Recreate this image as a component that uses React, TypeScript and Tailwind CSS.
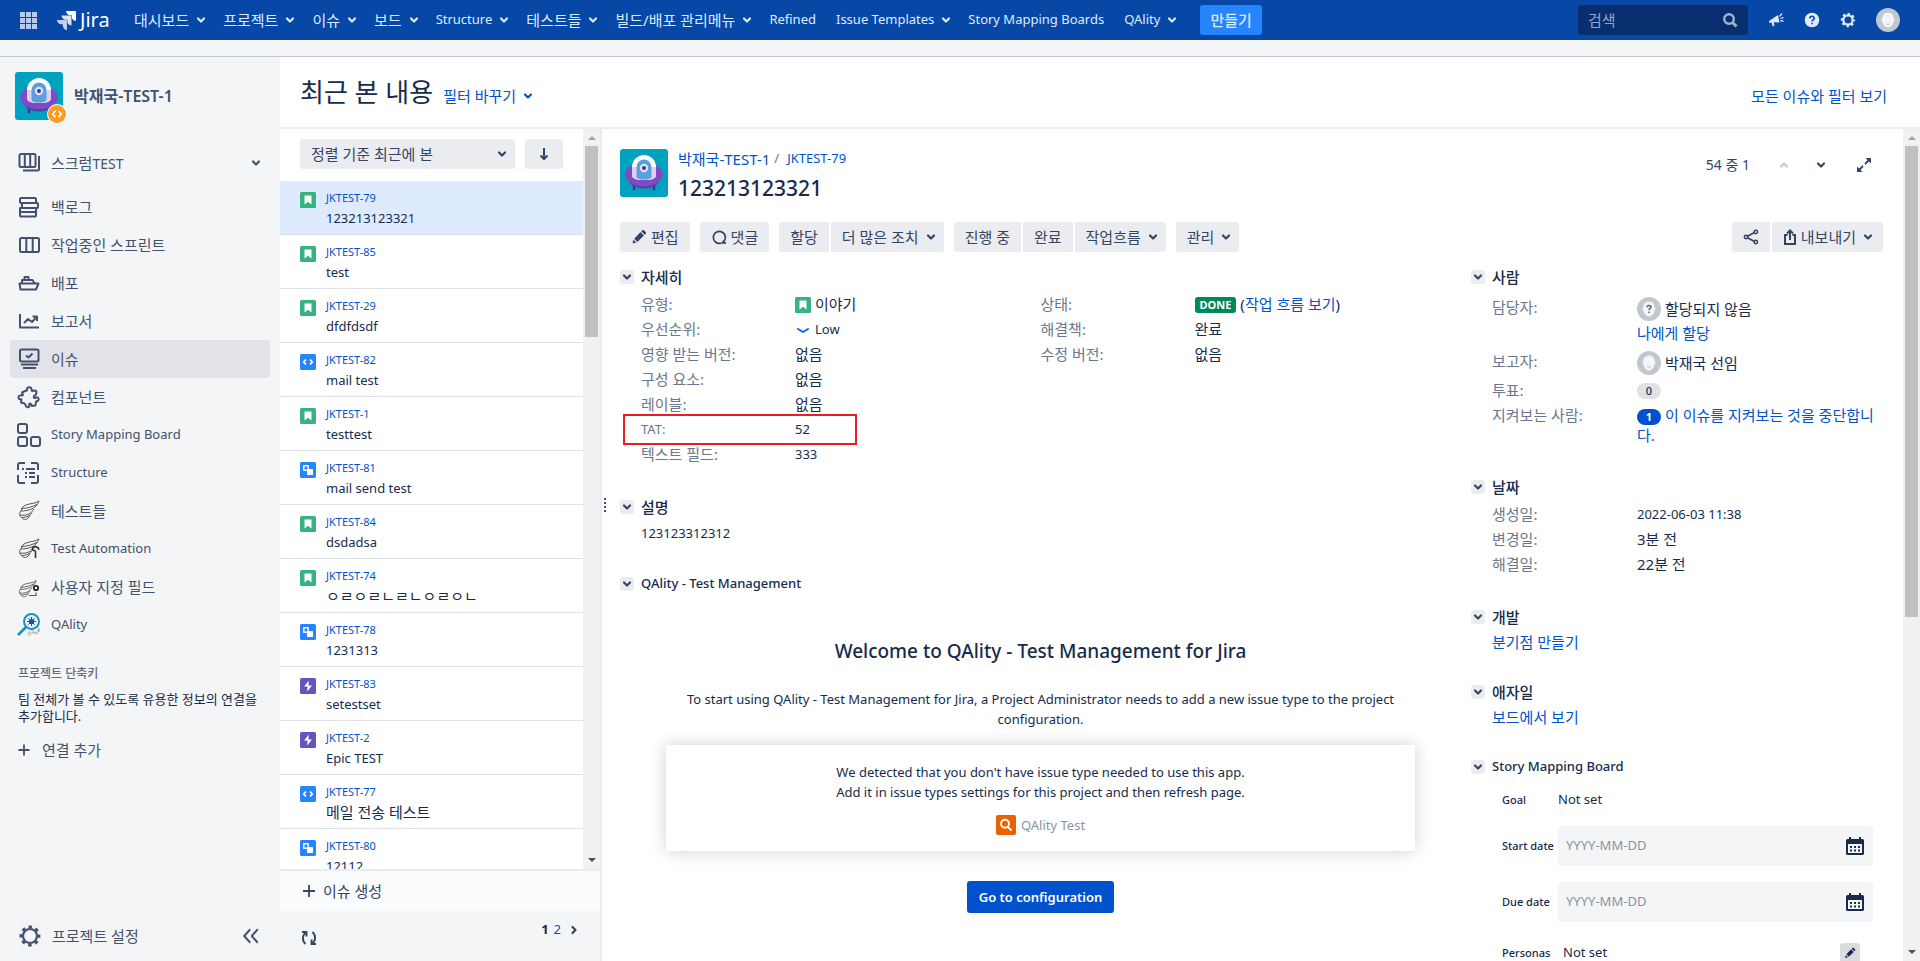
import type { ReactNode } from "react";

type IssueKind = "story" | "code" | "subtask" | "epic";

const NAV = [
  { label: "대시보드", menu: true },
  { label: "프로젝트", menu: true },
  { label: "이슈", menu: true },
  { label: "보드", menu: true },
  { label: "Structure", menu: true },
  { label: "테스트들", menu: true },
  { label: "빌드/배포 관리메뉴", menu: true },
  { label: "Refined", menu: false },
  { label: "Issue Templates", menu: true },
  { label: "Story Mapping Boards", menu: false },
  { label: "QAlity", menu: true },
];

const ISSUES: { key: string; summary: string; kind: IssueKind }[] = [
  { key: "JKTEST-79", summary: "123213123321", kind: "story" },
  { key: "JKTEST-85", summary: "test", kind: "story" },
  { key: "JKTEST-29", summary: "dfdfdsdf", kind: "story" },
  { key: "JKTEST-82", summary: "mail test", kind: "code" },
  { key: "JKTEST-1", summary: "testtest", kind: "story" },
  { key: "JKTEST-81", summary: "mail send test", kind: "subtask" },
  { key: "JKTEST-84", summary: "dsdadsa", kind: "story" },
  { key: "JKTEST-74", summary: "ㅇㄹㅇㄹㄴㄹㄴㅇㄹㅇㄴ", kind: "story" },
  { key: "JKTEST-78", summary: "1231313", kind: "subtask" },
  { key: "JKTEST-83", summary: "setestset", kind: "epic" },
  { key: "JKTEST-2", summary: "Epic TEST", kind: "epic" },
  { key: "JKTEST-77", summary: "메일 전송 테스트", kind: "code" },
  { key: "JKTEST-80", summary: "12112", kind: "subtask" },
];

// Hangul is set a little larger than Latin so both look even
function textSize(s: string) {
  return /[가-힣ㄱ-ㅎ]/.test(s) ? "text-[15px]" : "text-[13px]";
}

function Chevron({ up = false, className = "" }: { up?: boolean; className?: string }) {
  return (
    <svg viewBox="0 0 16 16" className={`size-4 shrink-0 ${className}`} fill="none" stroke="currentColor" strokeWidth="2.2" strokeLinecap="round" strokeLinejoin="round">
      <path d={up ? "M5 9.5 8 6.5 11 9.5" : "M5 6.5 8 9.5 11 6.5"} />
    </svg>
  );
}

function ProjectAvatar() {
  return (
    <svg viewBox="0 0 48 48" className="size-12 shrink-0 rounded-[3px]">
      <rect width="48" height="48" fill="#00A3BF" />
      <path d="M14 35v6M34 35v6" stroke="#403294" strokeWidth="2.6" />
      <ellipse cx="24" cy="29" rx="16" ry="10.5" fill="#5243AA" />
      <ellipse cx="24" cy="25.5" rx="19" ry="11.5" fill="#7F4BC2" />
      <path d="M12 18a12 12 0 0 1 24 0v8c0 4-5 5-12 5s-12-1-12-5z" fill="#fff" />
      <path d="M12 18v8c0 4 5 5 12 5s12-1 12-5v-8z" fill="#DDD0F0" />
      <path d="M16.500 18a7.500 7.500 0 0 1 15 0v10c-1 2-4 2.500-7.500 2.500s-6.500-.5-7.500-2.500z" fill="#5BA0DE" />
      <circle cx="24" cy="19" r="4.200" fill="#E6E0F5" />
      <circle cx="24" cy="19" r="2" fill="#3B3A8C" />
    </svg>
  );
}

function IssueIcon({ kind }: { kind: IssueKind }) {
  return (
    <svg viewBox="0 0 16 16" className="size-4 shrink-0">
      <rect width="16" height="16" rx="1.500" fill={kind === "story" ? "#36B37E" : kind === "epic" ? "#6554C0" : "#2684FF"} />
      {kind === "story" && <path d="M4.500 3.500h7v9L8 9.700l-3.500 2.800z" fill="#fff" />}
      {kind === "code" && <path d="M6 5.500 3.700 8 6 10.500M10 5.500 12.300 8 10 10.500" fill="none" stroke="#fff" strokeWidth="1.700" />}
      {kind === "subtask" && (
        <>
          <rect x="3.800" y="3.800" width="4.400" height="4.400" fill="none" stroke="#fff" strokeWidth="1.400" />
          <rect x="7" y="7" width="6" height="6" rx=".5" fill="#fff" />
        </>
      )}
      {kind === "epic" && <path d="M8.700 2.800 4 8.600h3.500l-.3 4.800L12 7.400H8.500z" fill="#fff" />}
    </svg>
  );
}

function UserAvatar({ unknown = false }: { unknown?: boolean }) {
  return (
    <svg viewBox="0 0 24 24" className="size-6 shrink-0">
      <circle cx="12" cy="12" r="12" fill="#C1C7D0" />
      <path d="M12 4.500c4 0 5.500 2.800 5.800 6 .9.300.9 2-.1 2.500-.7 4-3 6.500-5.700 6.500S7 17 6.300 13c-1-.5-1-2.200-.1-2.500.3-3.200 1.800-6 5.800-6z" fill="#F4F5F7" />
      {unknown ? (
        <path d="M10 10.300c0-2.600 4-2.400 4-.3 0 1.500-2 1.500-2 3M12 14.500v1.500" fill="none" stroke="#505F79" strokeWidth="1.500" />
      ) : (
        <path d="M10 15.500c1 1.200 3 1.200 4 0" fill="none" stroke="#C1C7D0" strokeWidth="1" />
      )}
    </svg>
  );
}

function Svg({ children, className = "size-6" }: { children: ReactNode; className?: string }) {
  return (
    <svg viewBox="0 0 24 24" className={`${className} shrink-0`} fill="none" stroke="currentColor" strokeWidth="2" strokeLinejoin="round">
      {children}
    </svg>
  );
}

function GearIcon({ className = "size-6" }: { className?: string }) {
  return (
    <Svg className={className}>
      <circle cx="12" cy="12" r="7" strokeWidth="2.200" />
      <circle cx="12" cy="12" r="9" strokeWidth="2.800" strokeDasharray="3.534 3.534" strokeDashoffset="1.767" />
    </Svg>
  );
}

function PencilIcon({ className = "size-4" }: { className?: string }) {
  return (
    <svg viewBox="0 0 16 16" className={`${className} shrink-0`} fill="currentColor">
      <path d="m1.500 14.500.9-3.800 2.900 2.900zM3.200 9.700l6.300-6.600 3.400 3.400-6.500 6.400zM10.300 2.300l.9-.9c.6-.6 1.400-.5 1.900 0l1.500 1.500c.6.600.6 1.400 0 2l-.9.800z" />
    </svg>
  );
}

const feather = (
  <g stroke="#444" strokeWidth=".900">
    <path d="M22 2c-4 3-8 2-13 4-3 1-4 3-5 6 7 0 12-2 15-5 2-2 2-3 3-5z" />
    <path d="M4 9.500c7 0 11-2 16-4M3.500 12c-1 2-1 3-.5 4 6 1 11-1 14-6M3 16c0 1 .5 2 1.500 2.500 5 0 9-2 10.500-5M5 18.500c1 3 6 3 8-2.500" />
  </g>
);

const SIDE_LINKS: { label: string; icon: ReactNode }[] = [
  {
    label: "백로그",
    icon: (
      <Svg>
        <rect x="3" y="3" width="16" height="5" rx="1" />
        <rect x="5" y="8" width="16" height="5" rx="1" />
        <path d="M3 13h16v7.500a1 1 0 0 1-1 1H4a1 1 0 0 1-1-1zM3 17h16" />
      </Svg>
    ),
  },
  {
    label: "작업중인 스프린트",
    icon: (
      <Svg>
        <rect x="3" y="5" width="19" height="14" rx="1.500" />
        <path d="M9.300 5v14M15.700 5v14" />
      </Svg>
    ),
  },
  {
    label: "배포",
    icon: (
      <Svg>
        <path d="M2.500 12.500h19l-2.500 6H3.500zM5 12V9h10.500l2 3M7.500 9V6h4v3" />
      </Svg>
    ),
  },
  {
    label: "보고서",
    icon: (
      <Svg>
        <path d="M3 5v13.500h19M7 14l4-4 4 3 4.500-5M15.500 7.500h4.500v4.500" />
      </Svg>
    ),
  },
  {
    label: "이슈",
    icon: (
      <Svg>
        <rect x="3" y="2.500" width="18.500" height="12" rx="1.500" />
        <path d="m9 8.500 2.500 2 4-4M4 17.500h17M6 21h13" />
      </Svg>
    ),
  },
  {
    label: "컴포넌트",
    icon: (
      <Svg>
        <path d="M10 5.500c-1-4 4.500-4.500 4.500-1l.5 1.500 3.500-.5 1 1-.5 3-2 1.500c-1 2 1 2.500 2 1.500 3-1.500 4 4 0 4l-.5 4-3.500.5-1-2c-1.500-1-2.500.5-1.500 2-.500 2-3.500 1.500-4-1l-1-1.500-3.500-1 .5-3c-1-.5-3 .5-3-2s3-2.500 4-2l.5-1-1-2 3-1.500z" />
      </Svg>
    ),
  },
  {
    label: "Story Mapping Board",
    icon: (
      <Svg>
        <rect x="1" y="1" width="9" height="9" rx="2" />
        <rect x="1" y="14" width="9" height="9" rx="2" />
        <rect x="14" y="14" width="9" height="9" rx="2" />
      </Svg>
    ),
  },
  {
    label: "Structure",
    icon: (
      <Svg>
        <path d="M8 2H3a2 2 0 0 0-2 2v5M14 2h5a2 2 0 0 1 2 2v5M1 14v6a2 2 0 0 0 2 2h5M14 22h5a2 2 0 0 0 2-2v-6M5 8h2M9 8h9M8 12h2M12 12h6M8 16h2M12 16h6" />
      </Svg>
    ),
  },
  { label: "테스트들", icon: <Svg>{feather}</Svg> },
  {
    label: "Test Automation",
    icon: (
      <Svg>
        {feather}
        <path d="M18.500 21v-7M21.500 13v-2l-3-1.500-3 1.500v2l3 1" stroke="#333" strokeWidth="1.600" />
      </Svg>
    ),
  },
  {
    label: "사용자 지정 필드",
    icon: (
      <Svg>
        <g transform="translate(0 4) scale(.87)">{feather}</g>
        <circle cx="19" cy="13" r="2.200" stroke="#222" strokeWidth="1.800" />
        <path d="M12 20.500h7v-3" stroke="#555" strokeWidth="1.200" />
      </Svg>
    ),
  },
  {
    label: "QAlity",
    icon: (
      <Svg>
        <circle cx="18.500" cy="17" r="3.200" stroke="#A5A5A5" strokeDasharray="2 1" />
        <circle cx="12.500" cy="20.500" r="1.500" stroke="#A5A5A5" strokeWidth="1" />
        <circle cx="14.500" cy="8.500" r="7.500" fill="#E6F4FC" stroke="#1B8FD6" />
        <path d="M9 14 1 22" stroke="#1B8FD6" strokeWidth="2.600" />
        <circle cx="14.500" cy="8.500" r="2.600" fill="#1D4F8C" stroke="none" />
        <path d="M14.500 4v9M10 8.500h9M11.300 5.300l6.400 6.400M17.700 5.300l-6.400 6.400" stroke="#1D4F8C" strokeWidth="1" />
      </Svg>
    ),
  },
];

function Scrollbar({ thumb }: { thumb: string }) {
  return (
    <div className="flex w-[17px] shrink-0 flex-col items-center bg-[#f1f1f1]">
      <svg viewBox="0 0 17 17" className="size-[17px] shrink-0">
        <path d="M5 11h8L9 7z" fill="#a3a3a3" />
      </svg>
      <div className="flex w-[13px] flex-1 flex-col">
        <div className={`bg-[#c1c1c1] ${thumb}`} />
      </div>
      <svg viewBox="0 0 17 17" className="size-[17px] shrink-0">
        <path d="M5 6h8l-4 4z" fill="#505050" />
      </svg>
    </div>
  );
}

function TopBar() {
  return (
    <header className="flex h-10 shrink-0 items-center bg-[#0747a6] pr-5 pl-5 text-[#deebff]">
      <button type="button" aria-label="앱 전환" className="mr-5">
        <svg viewBox="0 0 17 17" className="size-[17px]" fill="#B3CBF0">
          <path d="M0 0h5v5H0zM6 0h5v5H6zM12 0h5v5h-5zM0 6h5v5H0zM6 6h5v5H6zM12 6h5v5h-5zM0 12h5v5H0zM6 12h5v5H6zM12 12h5v5h-5z" />
        </svg>
      </button>
      <a href="#" className="mr-3 flex w-[55px] items-center gap-1 text-xl text-white">
        <svg viewBox="0 0 24 24" className="size-[19px] shrink-0" fill="#fff">
          <path opacity=".75" d="M11.571 11.513H0a5.218 5.218 0 0 0 5.232 5.215h2.130v2.057A5.215 5.215 0 0 0 12.575 24V12.518a1.005 1.005 0 0 0-1.005-1.005z" />
          <path opacity=".85" d="M17.294 5.757H5.736a5.215 5.215 0 0 0 5.215 5.214h2.129v2.058a5.218 5.218 0 0 0 5.215 5.214V6.758a1.001 1.001 0 0 0-1.001-1.001z" />
          <path d="M23.013 0H11.455a5.215 5.215 0 0 0 5.215 5.215h2.129v2.057A5.215 5.215 0 0 0 24 12.483V1.005A1.001 1.001 0 0 0 23.013 0Z" />
        </svg>
        Jira
      </a>
      <nav className="flex items-center">
        {NAV.map((item) => (
          <button
            key={item.label}
            type="button"
            className={`flex items-center gap-1 pl-[10px] whitespace-nowrap ${textSize(item.label)} ${item.menu ? "pr-1" : "pr-[10px]"}`}
          >
            {item.label}
            {item.menu && <Chevron />}
          </button>
        ))}
      </nav>
      <button type="button" className="ml-4 h-[30px] rounded-[3px] bg-[#2684ff] px-[10px] text-[15px] font-medium whitespace-nowrap">
        만들기
      </button>
      <div className="ml-auto flex items-center">
        <label className="mr-5 flex h-[30px] w-[170px] items-center rounded-[3px] bg-[#092e6f] pr-2.5 pl-2.5">
          <input type="text" aria-label="검색" placeholder="검색" className="min-w-0 flex-1 bg-transparent text-[15px] outline-none placeholder:text-[#91a5c9]" />
          <svg viewBox="0 0 16 16" className="size-4" fill="none" stroke="#9fb0d0" strokeWidth="2.400">
            <circle cx="7" cy="7" r="4.800" />
            <path d="m10.500 10.500 4 4" strokeWidth="3" />
          </svg>
        </label>
        <button type="button" aria-label="피드백" className="mr-5">
          <svg viewBox="0 0 16 16" className="size-4" fill="currentColor">
            <path d="M1 9 10 3l1.500 7.500-5.700-.3L6.500 14l-1.800.3L3.500 10.500 1.500 11z" />
            <path d="M11.500 4.500 14 1.500M12.500 6.500l3-1M12.500 8.500l3 .8" stroke="currentColor" strokeWidth="1.300" />
          </svg>
        </button>
        <button type="button" aria-label="도움말" className="mr-5">
          <svg viewBox="0 0 16 16" className="size-4">
            <circle cx="8" cy="8" r="7.300" fill="currentColor" />
            <path d="M5.800 6.500c0-3 4.500-2.800 4.500-.3 0 1.700-2.200 1.600-2.200 3.300M8.100 10.700v1.600" fill="none" stroke="#0747a6" strokeWidth="1.600" />
          </svg>
        </button>
        <button type="button" aria-label="관리" className="mr-5">
          <Svg className="size-4">
            <circle cx="12" cy="12" r="7" strokeWidth="3.400" />
            <circle cx="12" cy="12" r="9" strokeWidth="3.600" strokeDasharray="3.534 3.534" strokeDashoffset="1.767" />
          </Svg>
        </button>
        <button type="button" aria-label="프로필">
          <UserAvatar />
        </button>
      </div>
    </header>
  );
}

function Sidebar() {
  return (
    <aside className="flex w-[280px] shrink-0 flex-col bg-[#f4f5f7] text-[#42526e]">
      <div className="flex items-center gap-[11px] pt-[15px] pl-[15px]">
        <div className="relative">
          <ProjectAvatar />
          <svg viewBox="0 0 20 20" className="absolute -right-1 -bottom-1 size-5">
            <circle cx="10" cy="10" r="10" fill="#fff" />
            <circle cx="10" cy="10" r="9" fill="#FF991F" />
            <path d="M8.500 6.800 5.800 10l2.700 3.200M11.500 6.800l2.700 3.200-2.700 3.200" fill="none" stroke="#fff" strokeWidth="1.700" />
          </svg>
        </div>
        <h1 className="text-base font-semibold">박재국-TEST-1</h1>
      </div>
      <button type="button" className="mx-[10px] mt-6 flex h-[38px] items-center gap-[10px] px-[7px] text-[15px]">
        <Svg>
          <rect x="2.500" y="3" width="16" height="13" rx="1.500" />
          <path d="M7.800 3v13M13.200 3v13M6 19.500h14.500a1.500 1.500 0 0 0 1.500-1.500V5" />
        </Svg>
        <span>
          스크럼<span className="text-sm">TEST</span>
        </span>
        <Chevron className="-mr-px ml-auto" />
      </button>
      <nav className="mx-[10px] mt-[6px]">
        {SIDE_LINKS.map((link) => (
          <a
            key={link.label}
            href="#"
            className={`flex h-[38px] items-center gap-[10px] rounded-[3px] px-[7px] ${textSize(link.label)} ${link.label === "이슈" ? "bg-[#e2e3e9]" : ""}`}
          >
            {link.icon}
            {link.label}
          </a>
        ))}
      </nav>
      <div className="px-[18px] pt-[22px]">
        <h2 className="text-xs leading-4 font-medium text-[#5e6c84]">프로젝트 단축키</h2>
        <p className="mt-[9px] text-[13px] leading-[17px] text-[#172b4d]">팀 전체가 볼 수 있도록 유용한 정보의 연결을 추가합니다.</p>
        <button type="button" className="mt-[14px] flex items-center gap-3 text-[15px]">
          <svg viewBox="0 0 12 12" className="size-3" stroke="currentColor" strokeWidth="1.800">
            <path d="M6 .5v11M.5 6h11" />
          </svg>
          연결 추가
        </button>
      </div>
      <div className="mt-auto flex items-center justify-between pr-[20px] pb-[13px] pl-[18px]">
        <a href="#" className="flex items-center gap-[10px] text-[15px]">
          <GearIcon />
          프로젝트 설정
        </a>
        <button type="button" aria-label="사이드바 접기">
          <Svg className="size-[18px]">
            <path d="m11 3-8 9 8 9M21 3l-8 9 8 9" strokeWidth="2.600" />
          </Svg>
        </button>
      </div>
    </aside>
  );
}

function IssueList() {
  return (
    <section className="flex w-[322px] shrink-0 flex-col border-r-2 border-[#ebecf0]">
      <div className="flex min-h-0 flex-1">
        <div className="min-w-0 flex-1 overflow-hidden">
          <div className="flex gap-[10px] px-5 pt-[10px] pb-3 text-[#344563]">
            <div className="relative flex-1">
              <select aria-label="정렬 기준" className="h-[30px] w-full appearance-none rounded-[3px] bg-[#ebecf0] px-[11px] text-[15px]">
                <option>정렬 기준 최근에 본</option>
              </select>
              <Chevron className="pointer-events-none absolute top-[7px] right-[5px]" />
            </div>
            <button type="button" aria-label="정렬 방향" className="flex h-[30px] w-[38px] items-center justify-center rounded-[3px] bg-[#ebecf0]">
              <svg viewBox="0 0 12 14" className="h-[14px] w-3" fill="none" stroke="currentColor" strokeWidth="2">
                <path d="M6 1v11M2.500 8.500 6 12l3.500-3.500" />
              </svg>
            </button>
          </div>
          <ul>
            {ISSUES.map((issue, i) => (
              <li key={issue.key} className={`flex h-[54px] gap-[10px] border-b border-[#dfe1e6] pt-[11px] pl-5 ${i === 0 ? "bg-[#deebff]" : ""}`}>
                <IssueIcon kind={issue.kind} />
                <div className="-mt-1 flex flex-col">
                  <a href="#" className="text-[11px] leading-5 text-[#0052cc]">
                    {issue.key}
                  </a>
                  <span className={`leading-5 text-[#172b4d] ${textSize(issue.summary)}`}>{issue.summary}</span>
                </div>
              </li>
            ))}
          </ul>
        </div>
        <Scrollbar thumb="h-[27%]" />
      </div>
      <button type="button" className="flex h-[42px] items-center gap-2 border-t-2 border-[#ebecf0] bg-[#fafbfc] pl-[23px] text-[15px] text-[#344563]">
        <svg viewBox="0 0 12 12" className="size-3" stroke="currentColor" strokeWidth="1.800">
          <path d="M6 0v12M0 6h12" />
        </svg>
        이슈 생성
      </button>
      <div className="flex h-[50px] justify-between bg-[#f4f5f7] pr-[18px] pl-[21px] text-[#344563]">
        <button type="button" aria-label="새로 고침" className="pt-1">
          <svg viewBox="0 0 16 16" className="size-4" fill="none" stroke="currentColor" strokeWidth="1.900">
            <path d="M1 2h4.500v4.500M5 2.500C1 5 1 11 4.500 14M15 14h-4.500V9.500M11 13.500c4-2.500 4-8.500.5-11.500" />
          </svg>
        </button>
        <div className="flex h-[38px] items-center gap-[5px] text-[13px]">
          <b className="text-[#172b4d]">1</b>
          <a href="#" className="text-[#0052cc]">2</a>
          <Chevron className="-rotate-90" />
        </div>
      </div>
    </section>
  );
}

function ToolButton({ children, className = "rounded-[3px]" }: { children: ReactNode; className?: string }) {
  return (
    <button type="button" className={`flex h-[30px] items-center gap-1 bg-[#ebecf0] px-[11px] text-[15px] whitespace-nowrap text-[#344563] ${className}`}>
      {children}
    </button>
  );
}

function Module({ title, children, className = "mt-[25px]" }: { title: string; children: ReactNode; className?: string }) {
  return (
    <section className={className}>
      <h2 className="flex h-[30px] items-center gap-[7px]">
        <button type="button" aria-label={`${title} 접기`} className="flex size-[14px] items-center justify-center rounded-[3px] bg-[#ebecf0] text-[#344563]">
          <Chevron className="-m-px" />
        </button>
        <span className={`font-medium text-[#172b4d] ${textSize(title)}`}>{title}</span>
      </h2>
      <div className="pl-[21px]">{children}</div>
    </section>
  );
}

function Field({ label, children, className = "w-[154px]" }: { label: string; children: ReactNode; className?: string }) {
  return (
    <div className="flex h-[25px] items-center">
      <dt className={`shrink-0 text-[#6b778c] ${textSize(label)} ${className}`}>{label}</dt>
      <dd className="flex min-w-0 flex-1 items-center gap-1 text-[15px] whitespace-nowrap">{children}</dd>
    </div>
  );
}

function DateField({ id, label }: { id: string; label: string }) {
  return (
    <div className="flex items-center">
      <label htmlFor={id} className="w-14 shrink-0 text-[11px] font-medium whitespace-nowrap">
        {label}
      </label>
      <div className="flex h-10 min-w-0 flex-1 items-center rounded-[3px] bg-[#f4f5f7] pr-[9px] pl-2">
        <input id={id} type="text" placeholder="YYYY-MM-DD" className="min-w-0 flex-1 bg-transparent text-[13px] outline-none placeholder:text-[#8993a4]" />
        <svg viewBox="0 0 18 18" className="size-[18px]">
          <path d="M0 3.500A1.500 1.500 0 0 1 1.500 2H3V0h2v2h8V0h2v2h1.500A1.500 1.500 0 0 1 18 3.500v13a1.500 1.500 0 0 1-1.500 1.500h-15A1.500 1.500 0 0 1 0 16.500zM2 7v9h14V7z" fill="#172B4D" fillRule="evenodd" />
          <path d="M4 9h2v2H4zM8 9h2v2H8zM12 9h2v2h-2zM4 12.500h2v2H4zM8 12.500h2v2H8zM12 12.500h2v2h-2z" fill="#172B4D" />
        </svg>
      </div>
    </div>
  );
}

function IssueHeader() {
  return (
    <>
      <div className="flex gap-[10px]">
        <ProjectAvatar />
        <div>
          <div className="flex h-5 items-center text-[15px] text-[#0052cc]">
            <a href="#">박재국-TEST-1</a>
            <span className="mr-2 ml-1 text-[13px] text-[#6b778c]">/</span>
            <a href="#" className="text-[13px]">JKTEST-79</a>
          </div>
          <h1 className="mt-1 text-[21px] leading-[30px] font-medium">123213123321</h1>
        </div>
        <div className="ml-auto flex h-[31px] items-center text-[14px] text-[#344563]">
          <span className="mr-[26px]">54 중 1</span>
          <button type="button" aria-label="이전 이슈" className="mr-[21px] text-[#c1c7d0]">
            <Chevron up />
          </button>
          <button type="button" aria-label="다음 이슈" className="mr-[28px]">
            <Chevron />
          </button>
          <button type="button" aria-label="확대" className="mr-3">
            <svg viewBox="0 0 14 14" className="size-[14px]" fill="currentColor">
              <path d="M8.500 0H14v5.500zM0 8.500V14h5.500z" />
              <path d="m8 6 4-4M6 8l-4 4" stroke="currentColor" strokeWidth="1.800" />
            </svg>
          </button>
        </div>
      </div>
      <div className="mt-[19px] flex items-center">
        <ToolButton className="mr-[10px] rounded-[3px]">
          <PencilIcon />
          편집
        </ToolButton>
        <ToolButton className="mr-[10px] rounded-[3px]">
          <svg viewBox="0 0 16 16" className="size-4" fill="none" stroke="currentColor" strokeWidth="1.700">
            <path d="M10 14.200A6 6 0 1 1 12 13.200M10.300 13.900H15M12 11.500l1.500 2.400" />
          </svg>
          댓글
        </ToolButton>
        <ToolButton className="mr-0.5 rounded-l-[3px]">할당</ToolButton>
        <ToolButton className="mr-[10px] rounded-r-[3px]">
          더 많은 조치
          <Chevron className="-mr-1.5" />
        </ToolButton>
        <ToolButton className="mr-0.5 rounded-l-[3px]">진행 중</ToolButton>
        <ToolButton className="mr-0.5">완료</ToolButton>
        <ToolButton className="mr-[10px] rounded-r-[3px]">
          작업흐름
          <Chevron className="-mr-1.5" />
        </ToolButton>
        <ToolButton>
          관리
          <Chevron className="-mr-1.5" />
        </ToolButton>
        <ToolButton className="mr-0.5 ml-auto rounded-l-[3px]">
          <svg viewBox="0 0 16 16" className="size-4" fill="none" stroke="currentColor" strokeWidth="1.500">
            <path d="m4 7.500 7.500-4M4 8.500l7.500 4" />
            <circle cx="3" cy="8" r="1.700" />
            <circle cx="12.800" cy="3" r="1.700" />
            <circle cx="12.800" cy="13" r="1.700" />
          </svg>
        </ToolButton>
        <ToolButton className="rounded-r-[3px]">
          <svg viewBox="0 0 14 16" className="h-4 w-[14px]" fill="none" stroke="currentColor" strokeWidth="2">
            <path d="M4.500 6H2v9h10V6H9.500M7 11V2M4 4.500l3-3 3 3" />
          </svg>
          내보내기
          <Chevron className="-mr-1" />
        </ToolButton>
      </div>
    </>
  );
}

function MainColumn() {
  return (
    <div className="min-w-0 flex-1">
      <Module title="자세히" className="mt-[10px]">
        <div className="grid grid-cols-2 items-start">
          <dl>
            <Field label="유형:">
              <IssueIcon kind="story" />
              이야기
            </Field>
            <Field label="우선순위:">
              <svg viewBox="0 0 16 16" className="size-4" fill="none" stroke="#0065FF" strokeWidth="2" strokeLinecap="round" strokeLinejoin="round">
                <path d="m3 7 5 3 5-3" />
              </svg>
              <span className="text-[13px]">Low</span>
            </Field>
            <Field label="영향 받는 버전:">없음</Field>
            <Field label="구성 요소:">없음</Field>
            <Field label="레이블:">없음</Field>
            <div className="relative">
              <Field label="TAT:">
                <span className="text-[13px]">52</span>
              </Field>
              <span className="pointer-events-none absolute -top-[3px] -left-[18px] h-[31px] w-[234px] border-2 border-[#ed1c24]" />
            </div>
            <Field label="텍스트 필드:">
              <span className="text-[13px]">333</span>
            </Field>
          </dl>
          <dl>
            <Field label="상태:">
              <span className="rounded-[3px] bg-[#00875a] px-[5px] text-[11px] leading-4 font-bold text-white">DONE</span>
              <span>
                (<a href="#" className="text-[#0052cc]">작업 흐름 보기</a>)
              </span>
            </Field>
            <Field label="해결책:">완료</Field>
            <Field label="수정 버전:">없음</Field>
          </dl>
        </div>
      </Module>
      <Module title="설명">
        <p className="text-[13px] leading-[22px]">123123312312</p>
      </Module>
      <Module title="QAlity - Test Management">
        <div className="flex flex-col items-center px-[25px] text-center text-[13px] leading-5">
          <h3 className="mt-[38px] text-[19px] leading-7 font-medium">Welcome to QAlity - Test Management for Jira</h3>
          <p className="mt-6">
            To start using QAlity - Test Management for Jira, a Project Administrator needs to add a new issue type to the project configuration.
          </p>
          <div className="mt-4 flex w-full flex-col items-center bg-white pt-[17px] pb-4 shadow-[0_0_16px_rgba(9,30,66,0.2)]">
            <p>We detected that you don't have issue type needed to use this app.</p>
            <p>Add it in issue types settings for this project and then refresh page.</p>
            <div className="mt-[13px] flex items-center gap-[5px] text-[#8993a4]">
              <svg viewBox="0 0 20 20" className="size-5" fill="none" stroke="#fff" strokeWidth="1.900">
                <rect width="20" height="20" rx="2" fill="#EB6100" stroke="none" />
                <circle cx="9" cy="8.700" r="4" />
                <path d="m11.800 11.800 3.700 3.700" />
              </svg>
              QAlity Test
            </div>
          </div>
          <button type="button" className="mt-[30px] h-8 rounded-[3px] bg-[#0052cc] px-3 text-[13px] font-semibold text-white">
            Go to configuration
          </button>
        </div>
      </Module>
    </div>
  );
}

function SideColumn() {
  return (
    <div className="w-[412px] shrink-0">
      <Module title="사람" className="mt-[10px]">
        <dl className="grid grid-cols-[145px_1fr] pt-1 pb-0.5 text-[15px]">
          <dt className="leading-[22px] text-[#6b778c]">담당자:</dt>
          <dd className="flex items-center gap-1">
            <UserAvatar unknown />
            <span className="leading-[26px]">할당되지 않음</span>
          </dd>
          <dd className="col-start-2 pb-1.5 leading-[22px]">
            <a href="#" className="text-[#0052cc]">나에게 할당</a>
          </dd>
          <dt className="leading-[22px] text-[#6b778c]">보고자:</dt>
          <dd className="flex items-center gap-1">
            <UserAvatar />
            <span className="leading-[26px]">박재국 선임</span>
          </dd>
          <dt className="pt-0.5 leading-[25px] text-[#6b778c]">투표:</dt>
          <dd className="flex items-center pt-0.5">
            <span className="w-6 rounded-full bg-[#dfe1e6] text-center text-[11px] leading-4 font-medium">0</span>
          </dd>
          <dt className="pt-0.5 leading-5 text-[#6b778c]">지켜보는 사람:</dt>
          <dd className="pt-0.5 pr-2 leading-5 break-all">
            <span className="mr-1 inline-block w-6 rounded-full bg-[#0052cc] text-center text-[11px] leading-4 font-bold text-white">1</span>
            <a href="#" className="text-[#0052cc]">이 이슈를 지켜보는 것을 중단합니다.</a>
          </dd>
        </dl>
      </Module>
      <Module title="날짜">
        <dl>
          <Field label="생성일:" className="w-[145px]">
            <span className="text-[13px]">2022-06-03 11:38</span>
          </Field>
          <Field label="변경일:" className="w-[145px]">3분 전</Field>
          <Field label="해결일:" className="w-[145px]">22분 전</Field>
        </dl>
      </Module>
      <Module title="개발">
        <a href="#" className="block text-[15px] leading-5 text-[#0052cc]">분기점 만들기</a>
      </Module>
      <Module title="애자일">
        <a href="#" className="block text-[15px] leading-5 text-[#0052cc]">보드에서 보기</a>
      </Module>
      <Module title="Story Mapping Board">
        <div className="flex flex-col gap-4 pr-[10px] pl-[10px] text-[13px]">
          <div className="-mb-2 flex h-9 items-center">
            <span className="w-14 text-[11px] font-medium">Goal</span>
            Not set
          </div>
          <DateField id="start-date" label="Start date" />
          <DateField id="due-date" label="Due date" />
          <div className="flex h-[30px] items-center">
            <span className="w-[61px] text-[11px] font-medium">Personas</span>
            Not set
            <button type="button" aria-label="Personas 편집" className="mr-[13px] ml-auto flex size-5 items-center justify-center rounded-[3px] bg-[#dcdcde]">
              <PencilIcon className="size-3" />
            </button>
          </div>
        </div>
      </Module>
    </div>
  );
}

export default function App() {
  return (
    <div className="flex h-screen flex-col overflow-hidden bg-white font-['Noto_Sans','Noto_Sans_CJK_KR',sans-serif] text-[13px] text-[#172b4d]">
      <TopBar />
      <div className="h-[17px] shrink-0 border-b border-[#c1c7d0] bg-[#f4f5f7]" />
      <div className="flex min-h-0 flex-1">
        <Sidebar />
        <div className="flex min-w-0 flex-1 flex-col">
          <div className="flex h-[72px] shrink-0 items-center border-b-2 border-[#ebecf0] pr-[33px] pl-5">
            <h1 className="text-[26px] leading-8">최근 본 내용</h1>
            <button type="button" className="mt-2 ml-[10px] flex items-center gap-1 text-[15px] text-[#0052cc]">
              필터 바꾸기
              <Chevron />
            </button>
            <a href="#" className="mt-2 ml-auto text-[15px] text-[#0052cc]">모든 이슈와 필터 보기</a>
          </div>
          <div className="flex min-h-0 flex-1">
            <IssueList />
            <div className="flex w-[6px] shrink-0 items-center pl-0.5">
              <svg viewBox="0 0 2 14" className="mb-20 h-[14px] w-0.5" fill="#42526e">
                <path d="M0 0h2v2H0zM0 4h2v2H0zM0 8h2v2H0zM0 12h2v2H0z" />
              </svg>
            </div>
            <main className="min-w-0 flex-1 overflow-hidden pt-5 pr-5 pl-3">
              <IssueHeader />
              <div className="flex gap-[31px]">
                <MainColumn />
                <SideColumn />
              </div>
            </main>
            <Scrollbar thumb="h-[59%]" />
          </div>
        </div>
      </div>
    </div>
  );
}
